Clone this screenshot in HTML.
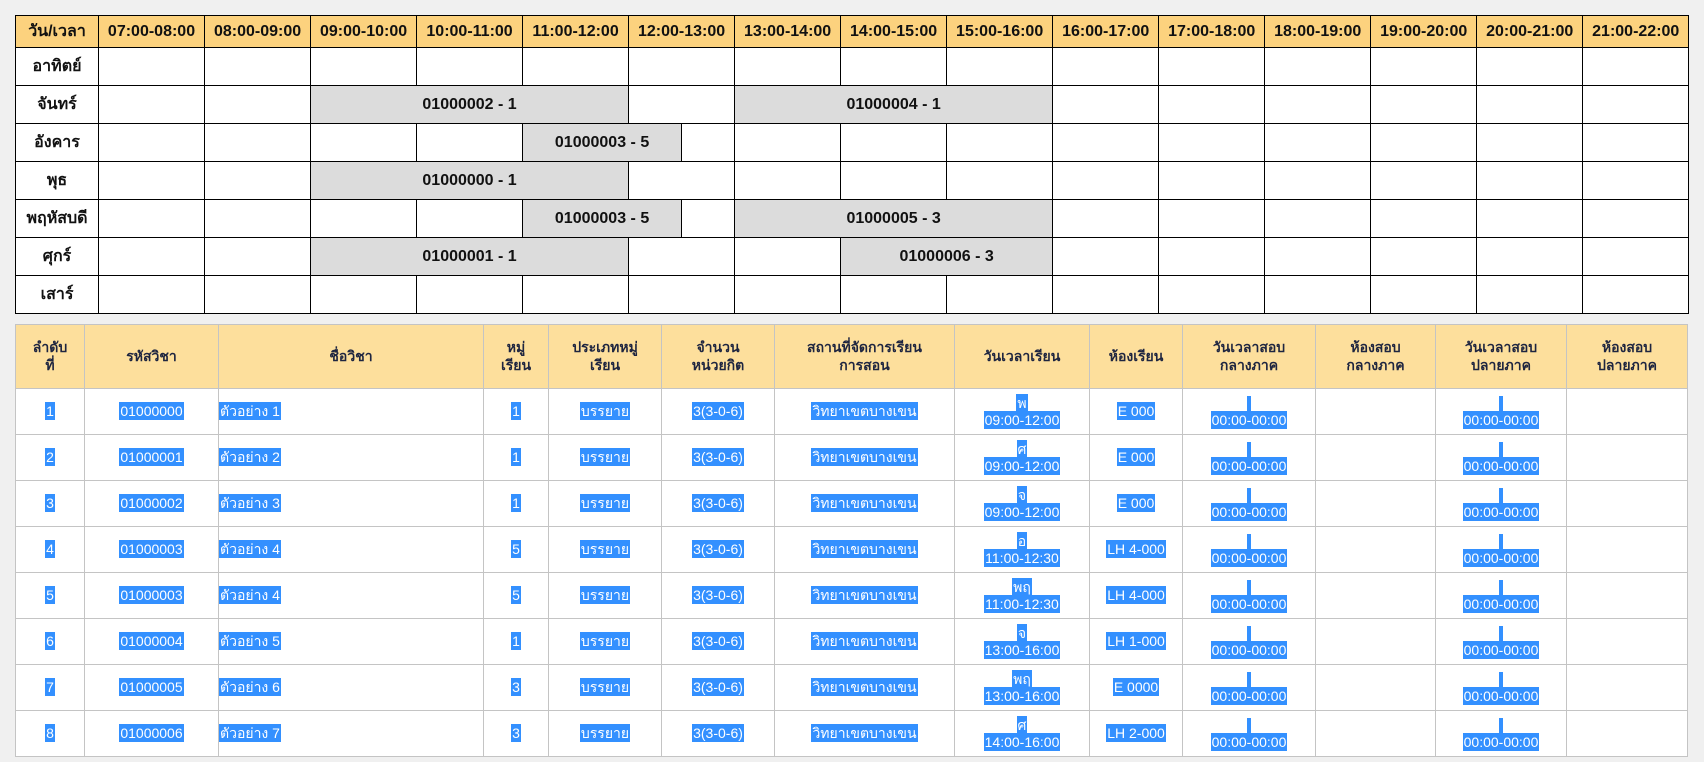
<!DOCTYPE html>
<html><head><meta charset="utf-8"><style>
body{margin:0;background:#f0f0f0;width:1704px;height:762px;overflow:hidden;font-family:"Liberation Sans",sans-serif}
#t1{position:absolute;left:15px;top:15px;width:1673px;border-collapse:collapse;table-layout:fixed;background:#fff;font-family:"Liberation Sans","DejaVu Sans",sans-serif;font-weight:bold;font-size:16px;color:#111}
#t1 td{border:1px solid #000;text-align:center;padding:0;height:37px;white-space:nowrap;overflow:hidden}
#t1 tr.h td{background:#fcd27e;height:31px;font-size:16px}
#t1 td.g{background:#dcdcdc}
#t2{position:absolute;left:15px;top:324px;width:1672px;border-collapse:collapse;table-layout:fixed;background:#fff;font-size:14px}
#t2 td{border:1px solid #c4c4c4;text-align:center;padding:0;height:45px;line-height:17px}
#t2 tr.h td{background:#fddf9c;height:63px;font-family:"DejaVu Serif","Liberation Serif",serif;font-weight:bold;font-size:14px;color:#1e2540;line-height:18px}
.s{background:#3390ff;color:#fff;padding:1px 1px}
.b{display:inline-block;width:4px;height:16px;background:#3390ff;vertical-align:bottom}
</style></head><body>
<table id="t1"><colgroup><col style="width:83px">
<col span="30" style="width:53px"></colgroup>
<tr class="h"><td>วัน/เวลา</td><td colspan=2>07:00-08:00</td><td colspan=2>08:00-09:00</td><td colspan=2>09:00-10:00</td><td colspan=2>10:00-11:00</td><td colspan=2>11:00-12:00</td><td colspan=2>12:00-13:00</td><td colspan=2>13:00-14:00</td><td colspan=2>14:00-15:00</td><td colspan=2>15:00-16:00</td><td colspan=2>16:00-17:00</td><td colspan=2>17:00-18:00</td><td colspan=2>18:00-19:00</td><td colspan=2>19:00-20:00</td><td colspan=2>20:00-21:00</td><td colspan=2>21:00-22:00</td></tr>
<tr><td>อาทิตย์</td><td colspan=2></td><td colspan=2></td><td colspan=2></td><td colspan=2></td><td colspan=2></td><td colspan=2></td><td colspan=2></td><td colspan=2></td><td colspan=2></td><td colspan=2></td><td colspan=2></td><td colspan=2></td><td colspan=2></td><td colspan=2></td><td colspan=2></td></tr>
<tr><td>จันทร์</td><td colspan=2></td><td colspan=2></td><td colspan=6 class="g">01000002 - 1</td><td colspan=2></td><td colspan=6 class="g">01000004 - 1</td><td colspan=2></td><td colspan=2></td><td colspan=2></td><td colspan=2></td><td colspan=2></td><td colspan=2></td></tr>
<tr><td>อังคาร</td><td colspan=2></td><td colspan=2></td><td colspan=2></td><td colspan=2></td><td colspan=3 class="g">01000003 - 5</td><td></td><td colspan=2></td><td colspan=2></td><td colspan=2></td><td colspan=2></td><td colspan=2></td><td colspan=2></td><td colspan=2></td><td colspan=2></td><td colspan=2></td></tr>
<tr><td>พุธ</td><td colspan=2></td><td colspan=2></td><td colspan=6 class="g">01000000 - 1</td><td colspan=2></td><td colspan=2></td><td colspan=2></td><td colspan=2></td><td colspan=2></td><td colspan=2></td><td colspan=2></td><td colspan=2></td><td colspan=2></td><td colspan=2></td></tr>
<tr><td>พฤหัสบดี</td><td colspan=2></td><td colspan=2></td><td colspan=2></td><td colspan=2></td><td colspan=3 class="g">01000003 - 5</td><td></td><td colspan=6 class="g">01000005 - 3</td><td colspan=2></td><td colspan=2></td><td colspan=2></td><td colspan=2></td><td colspan=2></td><td colspan=2></td></tr>
<tr><td>ศุกร์</td><td colspan=2></td><td colspan=2></td><td colspan=6 class="g">01000001 - 1</td><td colspan=2></td><td colspan=2></td><td colspan=4 class="g">01000006 - 3</td><td colspan=2></td><td colspan=2></td><td colspan=2></td><td colspan=2></td><td colspan=2></td><td colspan=2></td></tr>
<tr><td>เสาร์</td><td colspan=2></td><td colspan=2></td><td colspan=2></td><td colspan=2></td><td colspan=2></td><td colspan=2></td><td colspan=2></td><td colspan=2></td><td colspan=2></td><td colspan=2></td><td colspan=2></td><td colspan=2></td><td colspan=2></td><td colspan=2></td><td colspan=2></td></tr>
</table>
<table id="t2"><colgroup><col style="width:69px"><col style="width:134px"><col style="width:265px"><col style="width:65px"><col style="width:113px"><col style="width:113px"><col style="width:180px"><col style="width:135px"><col style="width:93px"><col style="width:133px"><col style="width:120px"><col style="width:131px"><col style="width:121px"></colgroup>
<tr class="h"><td>ลำดับ<br>ที่</td><td>รหัสวิชา</td><td>ชื่อวิชา</td><td>หมู่<br>เรียน</td><td>ประเภทหมู่<br>เรียน</td><td>จำนวน<br>หน่วยกิต</td><td>สถานที่จัดการเรียน<br>การสอน</td><td>วันเวลาเรียน</td><td>ห้องเรียน</td><td>วันเวลาสอบ<br>กลางภาค</td><td>ห้องสอบ<br>กลางภาค</td><td>วันเวลาสอบ<br>ปลายภาค</td><td>ห้องสอบ<br>ปลายภาค</td></tr>
<tr><td><span class="s">1</span></td><td><span class="s">01000000</span></td><td style="text-align:left"><span class="s">ตัวอย่าง 1</span></td><td><span class="s">1</span></td><td><span class="s">บรรยาย</span></td><td><span class="s">3(3-0-6)</span></td><td><span class="s">วิทยาเขตบางเขน</span></td><td><span class="s">พ</span><br><span class="s">09:00-12:00</span></td><td><span class="s">E 000</span></td><td><span class="b"></span><br><span class="s">00:00-00:00</span></td><td></td><td><span class="b"></span><br><span class="s">00:00-00:00</span></td><td></td></tr>
<tr><td><span class="s">2</span></td><td><span class="s">01000001</span></td><td style="text-align:left"><span class="s">ตัวอย่าง 2</span></td><td><span class="s">1</span></td><td><span class="s">บรรยาย</span></td><td><span class="s">3(3-0-6)</span></td><td><span class="s">วิทยาเขตบางเขน</span></td><td><span class="s">ศ</span><br><span class="s">09:00-12:00</span></td><td><span class="s">E 000</span></td><td><span class="b"></span><br><span class="s">00:00-00:00</span></td><td></td><td><span class="b"></span><br><span class="s">00:00-00:00</span></td><td></td></tr>
<tr><td><span class="s">3</span></td><td><span class="s">01000002</span></td><td style="text-align:left"><span class="s">ตัวอย่าง 3</span></td><td><span class="s">1</span></td><td><span class="s">บรรยาย</span></td><td><span class="s">3(3-0-6)</span></td><td><span class="s">วิทยาเขตบางเขน</span></td><td><span class="s">จ</span><br><span class="s">09:00-12:00</span></td><td><span class="s">E 000</span></td><td><span class="b"></span><br><span class="s">00:00-00:00</span></td><td></td><td><span class="b"></span><br><span class="s">00:00-00:00</span></td><td></td></tr>
<tr><td><span class="s">4</span></td><td><span class="s">01000003</span></td><td style="text-align:left"><span class="s">ตัวอย่าง 4</span></td><td><span class="s">5</span></td><td><span class="s">บรรยาย</span></td><td><span class="s">3(3-0-6)</span></td><td><span class="s">วิทยาเขตบางเขน</span></td><td><span class="s">อ</span><br><span class="s">11:00-12:30</span></td><td><span class="s">LH 4-000</span></td><td><span class="b"></span><br><span class="s">00:00-00:00</span></td><td></td><td><span class="b"></span><br><span class="s">00:00-00:00</span></td><td></td></tr>
<tr><td><span class="s">5</span></td><td><span class="s">01000003</span></td><td style="text-align:left"><span class="s">ตัวอย่าง 4</span></td><td><span class="s">5</span></td><td><span class="s">บรรยาย</span></td><td><span class="s">3(3-0-6)</span></td><td><span class="s">วิทยาเขตบางเขน</span></td><td><span class="s">พฤ</span><br><span class="s">11:00-12:30</span></td><td><span class="s">LH 4-000</span></td><td><span class="b"></span><br><span class="s">00:00-00:00</span></td><td></td><td><span class="b"></span><br><span class="s">00:00-00:00</span></td><td></td></tr>
<tr><td><span class="s">6</span></td><td><span class="s">01000004</span></td><td style="text-align:left"><span class="s">ตัวอย่าง 5</span></td><td><span class="s">1</span></td><td><span class="s">บรรยาย</span></td><td><span class="s">3(3-0-6)</span></td><td><span class="s">วิทยาเขตบางเขน</span></td><td><span class="s">จ</span><br><span class="s">13:00-16:00</span></td><td><span class="s">LH 1-000</span></td><td><span class="b"></span><br><span class="s">00:00-00:00</span></td><td></td><td><span class="b"></span><br><span class="s">00:00-00:00</span></td><td></td></tr>
<tr><td><span class="s">7</span></td><td><span class="s">01000005</span></td><td style="text-align:left"><span class="s">ตัวอย่าง 6</span></td><td><span class="s">3</span></td><td><span class="s">บรรยาย</span></td><td><span class="s">3(3-0-6)</span></td><td><span class="s">วิทยาเขตบางเขน</span></td><td><span class="s">พฤ</span><br><span class="s">13:00-16:00</span></td><td><span class="s">E 0000</span></td><td><span class="b"></span><br><span class="s">00:00-00:00</span></td><td></td><td><span class="b"></span><br><span class="s">00:00-00:00</span></td><td></td></tr>
<tr><td><span class="s">8</span></td><td><span class="s">01000006</span></td><td style="text-align:left"><span class="s">ตัวอย่าง 7</span></td><td><span class="s">3</span></td><td><span class="s">บรรยาย</span></td><td><span class="s">3(3-0-6)</span></td><td><span class="s">วิทยาเขตบางเขน</span></td><td><span class="s">ศ</span><br><span class="s">14:00-16:00</span></td><td><span class="s">LH 2-000</span></td><td><span class="b"></span><br><span class="s">00:00-00:00</span></td><td></td><td><span class="b"></span><br><span class="s">00:00-00:00</span></td><td></td></tr>
</table>
</body></html>
